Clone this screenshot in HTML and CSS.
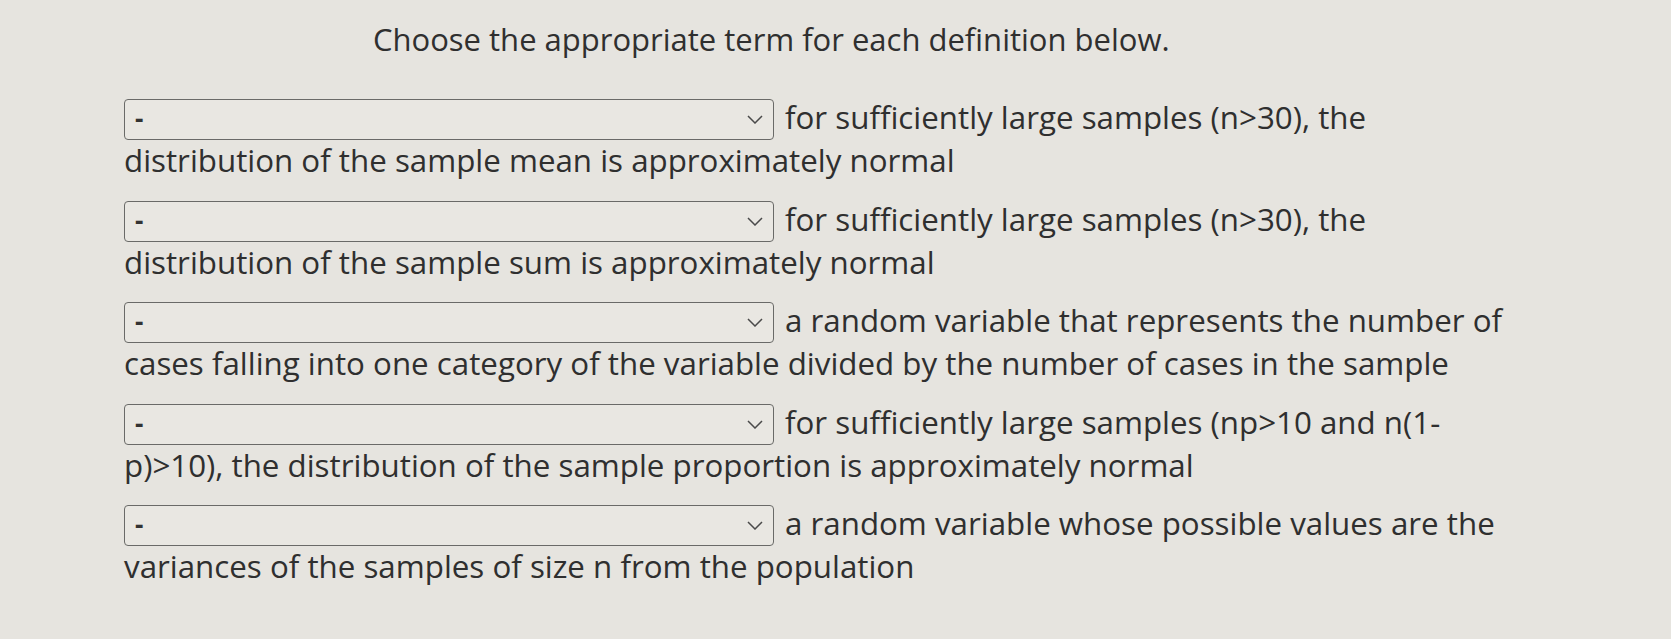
FILE: index.html
```html
<!DOCTYPE html>
<html lang="en">
<head>
<meta charset="utf-8">
<title>Choose the appropriate term</title>
<link rel="stylesheet" href="styles.css">
</head>
<body>
<main class="page">
  <h1 class="title">Choose the appropriate term for each definition below.</h1>
  <div class="items">
    <div class="item">
      <div class="line first">
        <div class="select"><span class="dash">-</span><svg class="chev" viewBox="0 0 16 9" width="16" height="9"><path d="M1 1 L8 8 L15 1" fill="none" stroke="#4a4a4a" stroke-width="1.5"/></svg></div>
        <span class="text">for sufficiently large samples (n&gt;30), the</span>
      </div>
      <div class="line second"><span class="text">distribution of the sample mean is approximately normal</span></div>
    </div>
    <div class="item">
      <div class="line first">
        <div class="select"><span class="dash">-</span><svg class="chev" viewBox="0 0 16 9" width="16" height="9"><path d="M1 1 L8 8 L15 1" fill="none" stroke="#4a4a4a" stroke-width="1.5"/></svg></div>
        <span class="text">for sufficiently large samples (n&gt;30), the</span>
      </div>
      <div class="line second"><span class="text">distribution of the sample sum is approximately normal</span></div>
    </div>
    <div class="item">
      <div class="line first">
        <div class="select"><span class="dash">-</span><svg class="chev" viewBox="0 0 16 9" width="16" height="9"><path d="M1 1 L8 8 L15 1" fill="none" stroke="#4a4a4a" stroke-width="1.5"/></svg></div>
        <span class="text">a random variable that represents the number of</span>
      </div>
      <div class="line second"><span class="text">cases falling into one category of the variable divided by the number of cases in the sample</span></div>
    </div>
    <div class="item">
      <div class="line first">
        <div class="select"><span class="dash">-</span><svg class="chev" viewBox="0 0 16 9" width="16" height="9"><path d="M1 1 L8 8 L15 1" fill="none" stroke="#4a4a4a" stroke-width="1.5"/></svg></div>
        <span class="text">for sufficiently large samples (np&gt;10 and n(1-</span>
      </div>
      <div class="line second"><span class="text">p)&gt;10), the distribution of the sample proportion is approximately normal</span></div>
    </div>
    <div class="item">
      <div class="line first">
        <div class="select"><span class="dash">-</span><svg class="chev" viewBox="0 0 16 9" width="16" height="9"><path d="M1 1 L8 8 L15 1" fill="none" stroke="#4a4a4a" stroke-width="1.5"/></svg></div>
        <span class="text">a random variable whose possible values are the</span>
      </div>
      <div class="line second"><span class="text">variances of the samples of size n from the population</span></div>
    </div>
  </div>
</main>
</body>
</html>
```

FILE: styles.css
```css
html, body {
  margin: 0;
  padding: 0;
  background: #e6e4df;
}
body {
  font-family: "Open Sans", "Liberation Sans", sans-serif;
  color: #2f2f2f;
  width: 1671px;
  height: 639px;
  overflow: hidden;
}
.page {
  padding: 19px 0 0 124px;
}
.title {
  margin: 0 0 0 249px;
  font-size: 31px;
  font-weight: normal;
  line-height: 40px;
  white-space: nowrap;
}
.items {
  margin-top: 40px;
  display: flex;
  flex-direction: column;
  gap: 15.5px;
}
.line {
  display: flex;
  align-items: flex-start;
  height: 42px;
  font-size: 31.3px;
  line-height: 34px;
  white-space: nowrap;
}
.line.first {
  gap: 11px;
}
.line.first .text {
  padding-top: 1px;
}
.line.second {
  height: 44px;
  padding-top: 2px;
  box-sizing: border-box;
}
.select {
  box-sizing: border-box;
  width: 650px;
  height: 41px;
  border: 1.5px solid #6a6a68;
  border-radius: 4px;
  background: #e9e7e2;
  display: flex;
  align-items: center;
  justify-content: space-between;
  padding: 0 10px 3px 10px;
}
.dash {
  display: block;
  font-size: 26px;
  font-weight: 700;
  line-height: 30px;
  color: #333;
}
.chev {
  display: block;
  margin-top: 3px;
}
```
